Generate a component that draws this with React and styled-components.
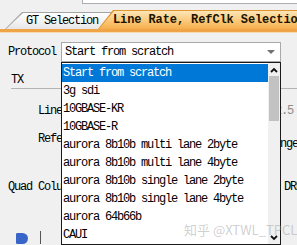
import styled, { createGlobalStyle } from "styled-components";

const GlobalStyle = createGlobalStyle`
  body {
    margin: 0;
    background: #f0f0f0;
  }
`;

const Frame = styled.div`
  position: relative;
  width: 297px;
  height: 245px;
  overflow: hidden;
  background: #f0f0f0;
  font-family: "Liberation Mono", "Noto Sans CJK SC", monospace;
  font-size: 12px;
  letter-spacing: -1.2px;
  color: #000;
`;

// поле сверху (обрезано)
const TopField = styled.div`
  margin-left: 82px;
  height: 3px;
  background: #fff;
  border-left: 1px solid #abadb3;
  border-bottom: 1px solid #abadb3;
`;

const TabBar = styled.div`
  display: flex;
  align-items: flex-end;
  height: 19px;
  margin-top: 6px;
`;

const TabOuter = styled.div`
  height: ${(p) => (p.$active ? "19px" : "17px")};
  width: ${(p) => (p.$active ? "auto" : "107px")};
  flex: ${(p) => (p.$active ? "1" : "none")};
  margin-left: ${(p) => (p.$active ? "-14px" : "5px")};
  padding: 1px 0 0 1px;
  box-sizing: border-box;
  background: ${(p) => (p.$active ? "#e0962e" : "#a4a4a4")};
  clip-path: polygon(0 100%, ${(p) => (p.$active ? "15px" : "17px")} 0, 100% 0, 100% 100%);
`;

const TabInner = styled.div`
  height: 100%;
  display: flex;
  align-items: center;
  padding-left: ${(p) => (p.$active ? "14px" : "20px")};
  background: ${(p) =>
    p.$active
      ? "linear-gradient(#fde6b8, #fbc878 55%, #f6ae4e)"
      : "linear-gradient(#ffffff, #f1f1f1 60%, #e6e6e6)"};
  clip-path: polygon(0 100%, ${(p) => (p.$active ? "15px" : "17px")} 0, 100% 0, 100% 100%);
  font-weight: ${(p) => (p.$active ? "bold" : "normal")};
  letter-spacing: ${(p) => (p.$active ? "-0.1px" : "-1.2px")};
  color: ${(p) => (p.$active ? "#1c1400" : "#000")};
  white-space: nowrap;
`;

const OrangeLine = styled.div`
  height: 3px;
  background: #f0a448;
  border-bottom: 1px solid #f6dcb4;
`;

const ProtocolRow = styled.div`
  display: flex;
  align-items: center;
  margin-top: 9px;
  padding-left: 8px;
`;

const Label = styled.span`
  width: 53px;
  white-space: nowrap;
`;

const SelectWrap = styled.div`
  position: relative;
  width: 220px;
`;

const SelectBox = styled.div`
  height: 20px;
  box-sizing: border-box;
  display: flex;
  align-items: center;
  justify-content: space-between;
  padding: 0 5px 0 3px;
  background: #fff;
  border: 1px solid #a9a9a9;
`;

const Arrow = styled.span`
  width: 0;
  height: 0;
  border-left: 4px solid transparent;
  border-right: 4px solid transparent;
  border-top: 4px solid #707070;
`;

const DropList = styled.div`
  position: absolute;
  left: 0;
  top: 20px;
  width: 220px;
  height: 183px;
  box-sizing: border-box;
  display: flex;
  background: #fff;
  border: 1px solid #1a1a1a;
  z-index: 2;
`;

const Items = styled.div`
  flex: 1;
  padding-top: 1px;
`;

const Item = styled.div`
  height: 18px;
  display: flex;
  align-items: center;
  padding-left: 1px;
  white-space: nowrap;
  background: ${(p) => (p.$selected ? "#0078d7" : "transparent")};
  color: ${(p) => (p.$selected ? "#fff" : "#000")};
`;

const ScrollBar = styled.div`
  width: 12px;
  display: flex;
  flex-direction: column;
  background: #f0f0f0;
`;

const ScrollBtn = styled.div`
  height: 13px;
  display: flex;
  align-items: center;
  justify-content: center;
`;

const Thumb = styled.div`
  height: 45px;
  margin: 0 1px;
  background: #c2c2c2;
`;

const Track = styled.div`
  flex: 1;
`;

const Watermark = styled.div`
  position: absolute;
  left: 184px;
  top: 220px;
  font-family: "Noto Sans CJK SC", "Noto Sans", sans-serif;
  font-size: 13px;
  letter-spacing: 0;
  color: rgba(150, 150, 150, 0.45);
  white-space: nowrap;
  z-index: 3;
`;

const Group = styled.div`
  margin: 11px 0 0 11px;
`;

const GroupTitle = styled.div`
  height: 15px;
  border-bottom: 1px solid #b4b4b4;
`;

const FormRow = styled.div`
  display: flex;
  align-items: flex-start;
  justify-content: space-between;
  height: 18px;
  line-height: 18px;
  margin-top: ${(p) => p.$top}px;
  padding-left: ${(p) => p.$indent}px;
`;

const Side = styled.span`
  width: ${(p) => p.$w}px;
  padding-top: ${(p) => p.$drop || 0}px;
  white-space: nowrap;
  overflow: hidden;
  color: ${(p) => (p.$muted ? "#8c8c8c" : "#000")};
`;

const BottomRow = styled.div`
  display: flex;
  align-items: flex-end;
  height: 13px;
  margin-top: 35px;
  padding-left: 16px;
`;

const Knob = styled.div`
  width: 12px;
  height: 11px;
  background: #3866c8;
  border-radius: 2px 8px 8px 2px;
`;

const Divider = styled.div`
  width: 1px;
  height: 13px;
  margin-left: 12px;
  background: #555;
`;

const Chip = styled.div`
  width: ${(p) => p.$w}px;
  height: 10px;
  margin-left: ${(p) => p.$gap}px;
  background: ${(p) => p.$bg};
  border: 1px solid #8a8a8a;
`;

const Chevron = ({ up }) => (
  <svg width="8" height="6" viewBox="0 0 8 6">
    <path
      d={up ? "M1 5 L4 2 L7 5" : "M1 1 L4 4 L7 1"}
      fill="none"
      stroke="#111"
      strokeWidth="1.8"
    />
  </svg>
);

const protocols = [
  "Start from scratch",
  "3g sdi",
  "10GBASE-KR",
  "10GBASE-R",
  "aurora 8b10b multi lane 2byte",
  "aurora 8b10b multi lane 4byte",
  "aurora 8b10b single lane 2byte",
  "aurora 8b10b single lane 4byte",
  "aurora 64b66b",
  "CAUI",
];

export default function App() {
  return (
    <>
      <GlobalStyle />
      <Frame>
        <TopField />
        <TabBar>
          <TabOuter>
            <TabInner>GT Selection</TabInner>
          </TabOuter>
          <TabOuter $active>
            <TabInner $active>Line Rate, RefClk Selection</TabInner>
          </TabOuter>
        </TabBar>
        <OrangeLine />

        <ProtocolRow>
          <Label>Protocol</Label>
          <SelectWrap>
            <SelectBox>
              <span>Start from scratch</span>
              <Arrow />
            </SelectBox>
            <DropList>
              <Items>
                {protocols.map((p, i) => (
                  <Item key={p} $selected={i === 0}>
                    {p}
                  </Item>
                ))}
              </Items>
              <ScrollBar>
                <ScrollBtn>
                  <Chevron up />
                </ScrollBtn>
                <Thumb />
                <Track />
                <ScrollBtn>
                  <Chevron />
                </ScrollBtn>
              </ScrollBar>
            </DropList>
          </SelectWrap>
        </ProtocolRow>

        <Group>
          <GroupTitle>TX</GroupTitle>
        </Group>
        <FormRow $top={13} $indent={38}>
          <Side $w={120}>Line Rate</Side>
          <Side $w={28} $muted>
            12.5
          </Side>
        </FormRow>
        <FormRow $top={10} $indent={38}>
          <Side $w={120}>Reference</Side>
          <Side $w={29} $drop={5}>
            Range
          </Side>
        </FormRow>
        <FormRow $top={30} $indent={8}>
          <Side $w={120}>Quad Column</Side>
          <Side $w={13}>DRP</Side>
        </FormRow>

        <BottomRow>
          <Knob />
          <Divider />
          <Chip $w={32} $gap={27} $bg="#e4e4e4" />
          <Chip $w={34} $gap={0} $bg="#2f9090" />
          <Chip $w={54} $gap={0} $bg="#f0f0f0" />
          <Chip $w={32} $gap={0} $bg="#5a5a5a" />
        </BottomRow>

        <Watermark>知乎 @XTWL_TPCL</Watermark>
      </Frame>
    </>
  );
}
